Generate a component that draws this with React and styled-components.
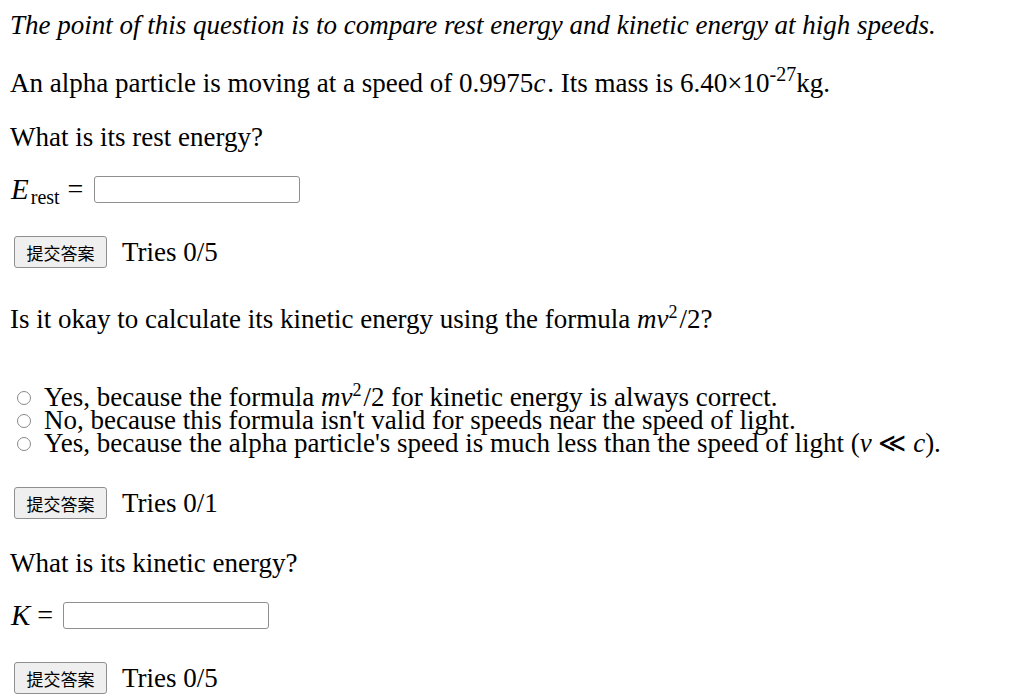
import React from 'react';
import styled, { createGlobalStyle } from 'styled-components';

const GlobalStyle = createGlobalStyle`
  body {
    margin: 0;
    background: #ffffff;
    color: #000000;
    font-family: "Liberation Serif", "Times New Roman", serif;
    font-size: 27px;
  }
`;

const Page = styled.div`
  display: flex;
  flex-direction: column;
  align-items: flex-start;
  padding: 11px 10px 0 10px;
`;

const Para = styled.p`
  margin: ${(p) => p.$top || 0}px 0 0 0;
  line-height: 28px;
  font-style: ${(p) => (p.$italic ? 'italic' : 'normal')};
  white-space: nowrap;
`;

const Var = styled.i`
  font-style: italic;
  margin-right: ${(p) => p.$gap || 0}px;
`;

const Sup = styled.sup`
  font-size: ${(p) => p.$size || 18}px;
  vertical-align: ${(p) => p.$raise || 10}px;
  line-height: 0;
  margin-right: ${(p) => p.$gap || 0}px;
`;

const AnswerRow = styled.div`
  display: flex;
  align-items: center;
  height: 28px;
  margin-top: ${(p) => p.$top || 0}px;
`;

const Symbol = styled.span`
  display: inline-flex;
  align-items: baseline;
  font-size: 29px;
  padding-left: 1px;
`;

const Sub = styled.span`
  font-size: 20px;
  font-style: normal;
  position: relative;
  top: 5px;
  margin-left: 2px;
`;

const Equals = styled.span`
  font-size: 28px;
  margin: 0 ${(p) => p.$right || 12}px 0 ${(p) => p.$left || 10}px;
`;

const TextInput = styled.input`
  box-sizing: border-box;
  width: 206px;
  height: 27px;
  border: 1px solid #8f8f8f;
  border-radius: 3px;
  background: #fff;
  padding: 0 4px;
  font-size: 16px;
  margin: 0;
`;

const SubmitRow = styled.div`
  display: flex;
  align-items: center;
  gap: 15px;
  margin-top: ${(p) => p.$top || 0}px;
  padding-left: 4px;
`;

const SubmitButton = styled.button`
  box-sizing: border-box;
  width: 93px;
  height: 32px;
  padding: 0;
  border: 1px solid #8f8f8f;
  border-radius: 3px;
  background: #efefef;
  color: #000;
  font-family: "Noto Sans CJK SC", "Noto Sans", sans-serif;
  font-size: 17px;
  line-height: 1;
`;

const Tries = styled.span`
  line-height: 28px;
`;

const Choices = styled.div`
  display: flex;
  flex-direction: column;
  margin-top: ${(p) => p.$top || 0}px;
  padding-left: 7px;
`;

const Choice = styled.label`
  display: flex;
  align-items: center;
  gap: 13px;
  height: 23px;
  line-height: 23px;
  white-space: nowrap;
`;

const Radio = styled.input.attrs({ type: 'radio' })`
  appearance: none;
  box-sizing: border-box;
  width: 14px;
  height: 14px;
  margin: 0;
  border: 1px solid #8a8a8a;
  border-radius: 50%;
  background: #fff;
  flex: none;
`;

const choices = [
  <>Yes, because the formula <Var>mv</Var><Sup $gap={2}>2</Sup>/2 for kinetic energy is always correct.</>,
  <>No, because this formula isn't valid for speeds near the speed of light.</>,
  <>Yes, because the alpha particle's speed is much less than the speed of light (<Var>v</Var> ≪ <Var>c</Var>).</>,
];

const App = () => {
  return (
    <>
      <GlobalStyle />
      <Page>
        <Para $italic>
          The point of this question is to compare rest energy and kinetic energy at high speeds.
        </Para>
        <Para $top={30}>
          An alpha particle is moving at a speed of 0.9975<Var $gap={2}>c</Var>. Its mass is 6.40×10<Sup $size={20} $raise={11}>-27</Sup>kg.
        </Para>
        <Para $top={26}>What is its rest energy?</Para>
        <AnswerRow $top={24}>
          <Symbol>
            <Var>E</Var>
            <Sub>rest</Sub>
          </Symbol>
          <Equals $left={8} $right={11}>=</Equals>
          <TextInput type="text" />
        </AnswerRow>
        <SubmitRow $top={33}>
          <SubmitButton>提交答案</SubmitButton>
          <Tries>Tries 0/5</Tries>
        </SubmitRow>
        <Para $top={37}>
          Is it okay to calculate its kinetic energy using the formula <Var>mv</Var><Sup $gap={2}>2</Sup>/2?
        </Para>
        <Choices $top={53}>
          {choices.map((c, i) => (
            <Choice key={i}>
              <Radio name="ke" />
              <span>{c}</span>
            </Choice>
          ))}
        </Choices>
        <SubmitRow $top={32}>
          <SubmitButton>提交答案</SubmitButton>
          <Tries>Tries 0/1</Tries>
        </SubmitRow>
        <Para $top={30}>What is its kinetic energy?</Para>
        <AnswerRow $top={24}>
          <Symbol>
            <Var>K</Var>
          </Symbol>
          <Equals $left={7} $right={10}>=</Equals>
          <TextInput type="text" />
        </AnswerRow>
        <SubmitRow $top={33}>
          <SubmitButton>提交答案</SubmitButton>
          <Tries>Tries 0/5</Tries>
        </SubmitRow>
      </Page>
    </>
  );
};

export default App;
